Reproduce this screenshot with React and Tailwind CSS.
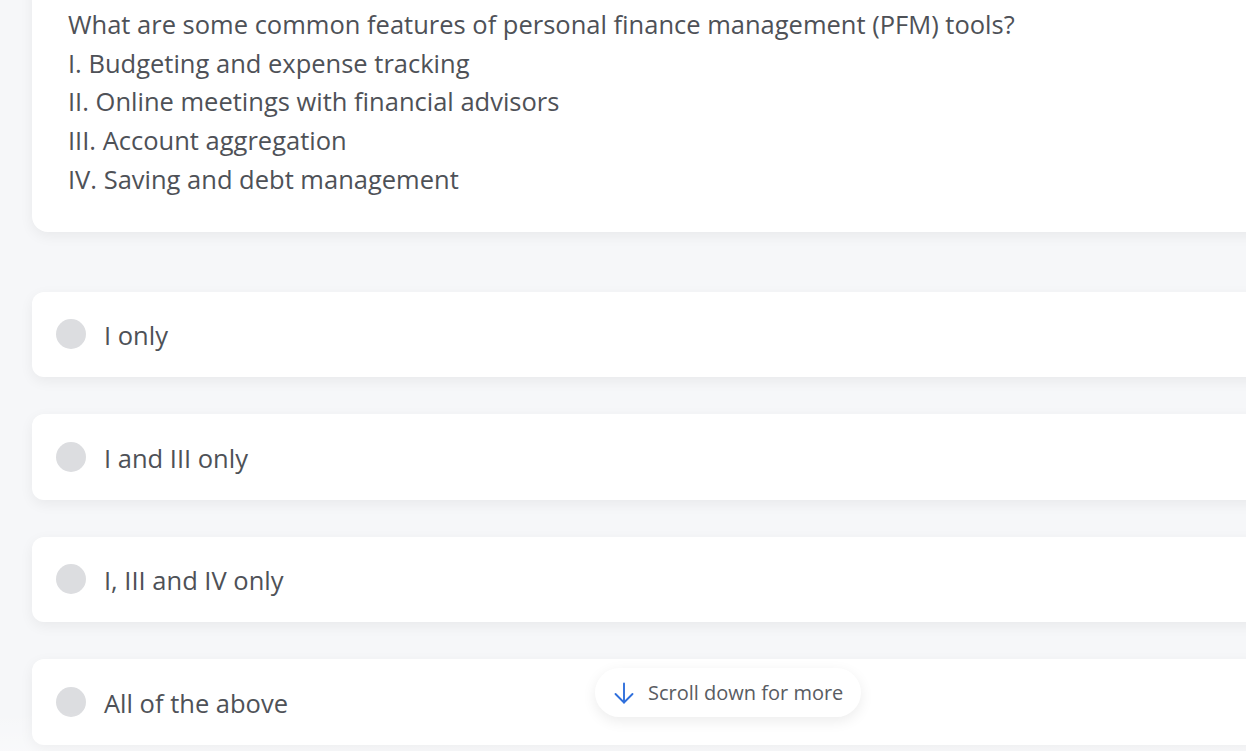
const OPTIONS = ['I only', 'I and III only', 'I, III and IV only', 'All of the above'];

const LINES = [
  'What are some common features of personal finance management (PFM) tools?',
  'I. Budgeting and expense tracking',
  'II. Online meetings with financial advisors',
  'III. Account aggregation',
  'IV. Saving and debt management',
];

export default function App() {
  return (
    <div
      className="relative h-[751px] w-[1246px] overflow-hidden bg-[#f6f7f9] text-[#4e5157]"
      style={{ fontFamily: '"Open Sans", "Noto Sans", sans-serif' }}
    >
      <div className="flex w-[1300px] flex-col pl-8">
        <div className="-mt-6 rounded-2xl bg-white pb-[33px] pl-9 pt-[29px] shadow-[0_4px_14px_rgba(0,0,0,0.06)]">
          {LINES.map((l, i) => (
            <div key={i} className="text-[25.5px] leading-[38.7px]">{l}</div>
          ))}
        </div>

        <div className="mt-[60px] flex flex-col gap-[37px]">
          {OPTIONS.map(o => (
            <div
              key={o}
              className="flex h-[85.5px] items-center gap-[18px] rounded-xl bg-white pl-6 shadow-[0_4px_14px_rgba(0,0,0,0.06)]"
            >
              <span className="h-[30px] w-[30px] shrink-0 rounded-full bg-[#dcdde0]" />
              <span className="pt-[2px] text-[25.5px]">{o}</span>
            </div>
          ))}
        </div>
      </div>

      <div className="pointer-events-none absolute bottom-0 left-0 h-[40px] w-full bg-gradient-to-b from-transparent to-white/30" />

      <div className="absolute left-[595px] top-[668px] flex h-[49px] w-[266px] items-center gap-[12px] rounded-full bg-white pl-[17px] shadow-[0_4px_14px_rgba(0,0,0,0.08)]">
        <svg width="24" height="24" viewBox="0 0 24 24" fill="none" stroke="#2f6fdc" strokeWidth="1.9" strokeLinecap="round" strokeLinejoin="round">
          <path d="M12 2.5v19" />
          <path d="M3.5 13l8.5 8.5 8.5-8.5" />
        </svg>
        <span className="text-[20px] text-[#595c62]">Scroll down for more</span>
      </div>
    </div>
  );
}
